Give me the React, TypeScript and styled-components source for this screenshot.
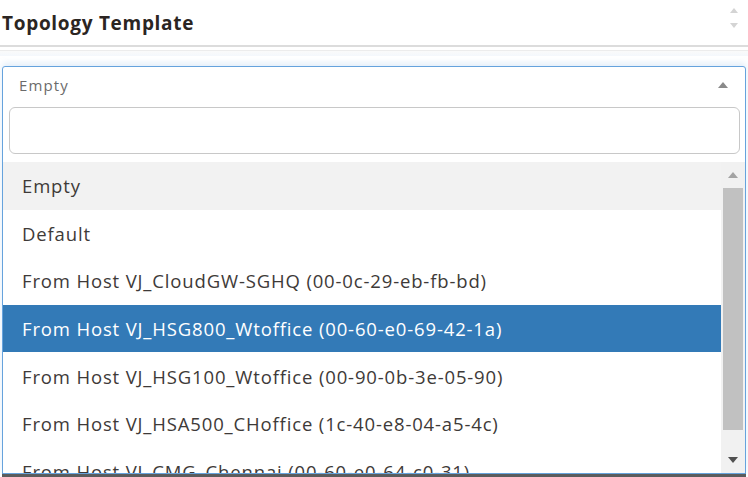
import React from "react";
import styled, { createGlobalStyle } from "styled-components";

const GlobalStyle = createGlobalStyle`
  html, body {
    margin: 0;
    padding: 0;
    background: #ffffff;
    font-family: "Open Sans", "Noto Sans", sans-serif;
  }
`;

const Page = styled.div`
  width: 748px;
  height: 477px;
  overflow: hidden;
  display: flex;
  flex-direction: column;
`;

const Header = styled.div`
  height: 45px;
  display: flex;
  align-items: center;
  justify-content: space-between;
  padding: 0 10px 0 2px;
  border-bottom: 2px solid #dcdcdc;
`;

const Title = styled.h3`
  margin: 0;
  font-size: 19px;
  font-weight: 700;
  color: #2b2522;
  letter-spacing: 0.7px;
`;

const Spinner = styled.div`
  display: flex;
  flex-direction: column;
  gap: 10px;
  margin-top: -9px;
`;

const Arrow = styled.span<{ $dir: "up" | "down"; $size?: number; $color?: string }>`
  width: 0;
  height: 0;
  border-left: ${(p) => p.$size ?? 4}px solid transparent;
  border-right: ${(p) => p.$size ?? 4}px solid transparent;
  ${(p) =>
    p.$dir === "up"
      ? `border-bottom: ${(p.$size ?? 4) + 1}px solid ${p.$color ?? "#d4d4d4"};`
      : `border-top: ${(p.$size ?? 4) + 1}px solid ${p.$color ?? "#d4d4d4"};`}
`;

const Band = styled.div`
  height: 5px;
  margin-top: 3px;
  border-top: 1px solid #ececec;
  background: linear-gradient(#fafafa, #f4f8fc);
`;

const Select = styled.div`
  margin: 10px 2px 0 2px;
  height: 406px;
  border: 1px solid #66a3dd;
  border-radius: 3px 3px 0 0;
  box-shadow: 0 -3px 6px rgba(102, 163, 221, 0.18), 0 3px 0 #5c5c5c;
  display: flex;
  flex-direction: column;
  background: #fff;
`;

const SelectHead = styled.div`
  height: 36px;
  display: flex;
  align-items: center;
  justify-content: space-between;
  padding: 0 17px 0 16px;
  font-size: 15px;
  letter-spacing: 1.1px;
  color: #6b6b6b;
`;

const SearchWrap = styled.div`
  padding: 4px 5px 8px 6px;
`;

const SearchInput = styled.input`
  box-sizing: border-box;
  width: 100%;
  height: 47px;
  border: 1px solid #c8c8c8;
  border-radius: 6px;
  outline: none;
  font-family: inherit;
  font-size: 16px;
  padding: 0 10px;
`;

const ListArea = styled.div`
  flex: 1;
  display: flex;
  overflow: hidden;
  background: #f2f2f2;
`;

const Options = styled.ul`
  flex: 1;
  margin: 0;
  padding: 0;
  list-style: none;
  background: #fff;
`;

const Option = styled.li<{ $active?: boolean; $hover?: boolean }>`
  height: 47.6px;
  display: flex;
  align-items: center;
  padding-left: 19px;
  font-size: 18.5px;
  letter-spacing: 0.85px;
  white-space: nowrap;
  color: ${(p) => (p.$active ? "#ffffff" : "#3e3a38")};
  background: ${(p) => (p.$active ? "#337ab7" : p.$hover ? "#f2f2f2" : "#ffffff")};
`;

const Scrollbar = styled.div`
  width: 24px;
  display: flex;
  flex-direction: column;
  align-items: center;
  background: #f1f1f1;
`;

const ScrollBtn = styled.div`
  height: 26px;
  width: 100%;
  display: flex;
  align-items: center;
  justify-content: center;
`;

const Thumb = styled.div`
  width: 20px;
  height: 242px;
  background: #c1c1c1;
`;

const Spacer = styled.div`
  flex: 1;
`;

const options = [
  "Empty",
  "Default",
  "From Host VJ_CloudGW-SGHQ (00-0c-29-eb-fb-bd)",
  "From Host VJ_HSG800_Wtoffice (00-60-e0-69-42-1a)",
  "From Host VJ_HSG100_Wtoffice (00-90-0b-3e-05-90)",
  "From Host VJ_HSA500_CHoffice (1c-40-e8-04-a5-4c)",
  "From Host VJ_CMG_Chennai (00-60-e0-64-c0-31)",
];

export default function App() {
  return (
    <>
      <GlobalStyle />
      <Page>
        <Header>
          <Title>Topology Template</Title>
          <Spinner>
            <Arrow $dir="up" />
            <Arrow $dir="down" />
          </Spinner>
        </Header>
        <Band />
        <Select>
          <SelectHead>
            Empty
            <Arrow $dir="up" $size={5} $color="#8a8a8a" />
          </SelectHead>
          <SearchWrap>
            <SearchInput type="text" />
          </SearchWrap>
          <ListArea>
            <Options>
              {options.map((o, i) => (
                <Option key={o} $hover={i === 0} $active={i === 3}>
                  {o}
                </Option>
              ))}
            </Options>
            <Scrollbar>
              <ScrollBtn>
                <Arrow $dir="up" $size={5} $color="#a3a3a3" />
              </ScrollBtn>
              <Thumb />
              <Spacer />
              <ScrollBtn>
                <Arrow $dir="down" $size={5} $color="#505050" />
              </ScrollBtn>
            </Scrollbar>
          </ListArea>
        </Select>
      </Page>
    </>
  );
}
